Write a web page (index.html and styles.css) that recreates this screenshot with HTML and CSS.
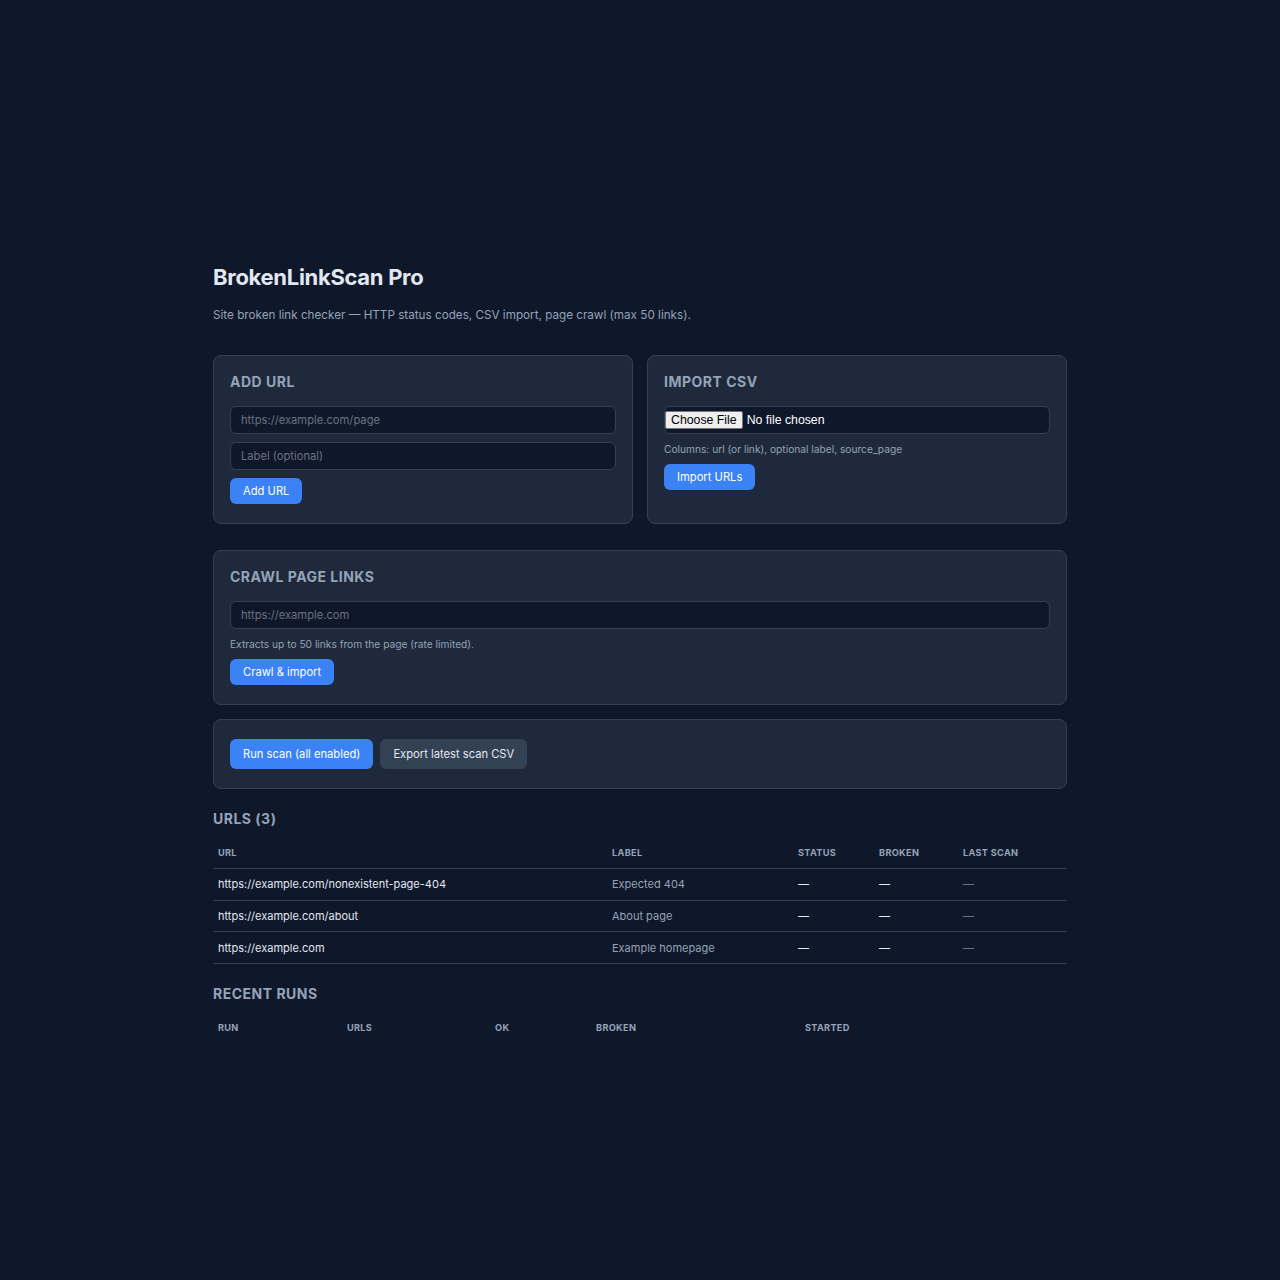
FILE: index.html
```html
<!DOCTYPE html>
<html lang="en">
<head>
<meta charset="utf-8">
<title>BrokenLinkScan Pro</title>
<link rel="stylesheet" href="styles.css">
</head>
<body>
<main class="wrap">
  <h1 class="title">BrokenLinkScan Pro</h1>
  <p class="subtitle">Site broken link checker — HTTP status codes, CSV import, page crawl (max 50 links).</p>

  <div class="grid2">
    <section class="card">
      <h2 class="card-title">Add URL</h2>
      <input class="field" type="text" placeholder="https://example.com/page">
      <input class="field" type="text" placeholder="Label (optional)">
      <div class="btn-row"><button class="btn btn-primary">Add URL</button></div>
    </section>
    <section class="card">
      <h2 class="card-title">Import CSV</h2>
      <div class="field file-field"><span class="file-btn">Choose File</span><span class="file-text">No file chosen</span></div>
      <p class="hint">Columns: url (or link), optional label, source_page</p>
      <div class="btn-row"><button class="btn btn-primary">Import URLs</button></div>
    </section>
  </div>

  <section class="card card-crawl">
    <h2 class="card-title">Crawl page links</h2>
    <input class="field" type="text" placeholder="https://example.com">
    <p class="hint">Extracts up to 50 links from the page (rate limited).</p>
    <div class="btn-row"><button class="btn btn-primary">Crawl &amp; import</button></div>
  </section>

  <section class="card card-actions">
    <button class="btn btn-primary btn-lg">Run scan (all enabled)</button>
    <button class="btn btn-secondary btn-lg">Export latest scan CSV</button>
  </section>

  <h2 class="section-title">URLs (3)</h2>
  <table class="tbl tbl-urls">
    <thead>
      <tr><th class="c-url">URL</th><th class="c-label">Label</th><th class="c-status">Status</th><th class="c-broken">Broken</th><th>Last scan</th></tr>
    </thead>
    <tbody>
      <tr><td>https://example.com/nonexistent-page-404</td><td class="muted">Expected 404</td><td>—</td><td>—</td><td class="dim">—</td></tr>
      <tr><td>https://example.com/about</td><td class="muted">About page</td><td>—</td><td>—</td><td class="dim">—</td></tr>
      <tr><td>https://example.com</td><td class="muted">Example homepage</td><td>—</td><td>—</td><td class="dim">—</td></tr>
    </tbody>
  </table>

  <h2 class="section-title section-runs">Recent runs</h2>
  <table class="tbl tbl-runs">
    <thead>
      <tr><th class="r-run">Run</th><th class="r-urls">URLs</th><th class="r-ok">OK</th><th class="r-broken">Broken</th><th>Started</th></tr>
    </thead>
    <tbody></tbody>
  </table>
</main>
</body>
</html>
```

FILE: styles.css
```css
* { box-sizing: border-box; }
html, body {
  margin: 0;
  background: #0f172a;
  color: #e2e8f0;
  font-family: Inter, "Noto Sans", "Liberation Sans", sans-serif;
}
.wrap {
  width: 854px;
  margin: 0 auto;
  padding-top: 262px;
}
.title {
  margin: 0;
  font-size: 22px;
  line-height: 30px;
  font-weight: 700;
  color: #e2e8f0;
  letter-spacing: -0.3px;
}
.subtitle {
  margin: 15px 0 0;
  font-size: 11.7px;
  line-height: 16px;
  color: #94a3b8;
}
.grid2 {
  display: grid;
  grid-template-columns: 1fr 1fr;
  gap: 14px;
  margin-top: 32px;
}
.card {
  background: #1e293b;
  border: 1px solid #334155;
  border-radius: 8px;
  padding: 17px 16px 19px;
  display: flex;
  flex-direction: column;
  align-items: stretch;
}
.card-title {
  margin: 0 0 15px;
  font-size: 14px;
  line-height: 18px;
  font-weight: 700;
  text-transform: uppercase;
  letter-spacing: 0.5px;
  color: #94a3b8;
}
.field {
  height: 28px;
  margin: 0 0 8px;
  padding: 0 10px;
  background: #0f172a;
  border: 1px solid #334155;
  border-radius: 6px;
  color: #e2e8f0;
  font-family: inherit;
  font-size: 11.2px;
  outline: none;
}
.field::placeholder { color: #6b7280; }
.file-field {
  display: flex;
  align-items: center;
  padding: 0;
}
.file-btn {
  margin-left: 0;
  height: 18px;
  padding: 0 5px;
  display: inline-flex;
  align-items: center;
  background: #efefef;
  border: 1px solid #767676;
  border-radius: 2px;
  color: #000;
  font-family: "Liberation Sans", Arial, sans-serif;
  font-size: 12.3px;
}
.file-text {
  margin-left: 4px;
  color: #fff;
  font-family: "Liberation Sans", Arial, sans-serif;
  font-size: 12.3px;
}
.hint {
  margin: 0 0 8px;
  font-size: 10.2px;
  line-height: 14px;
  color: #94a3b8;
}
.btn-row { display: flex; }
.btn {
  border: 0;
  border-radius: 6px;
  font-family: inherit;
  font-size: 11.2px;
  line-height: 16px;
  padding: 0 13px;
  height: 26px;
  color: #fff;
  cursor: pointer;
}
.btn-primary { background: #3b82f6; }
.btn-secondary { background: #334155; color: #e2e8f0; }
.btn-lg { height: 30px; }
.card-crawl { margin-top: 26px; }
.card-actions {
  margin-top: 14px;
  flex-direction: row;
  gap: 7px;
  padding: 19px 16px;
}
.section-title {
  margin: 20px 0 0;
  font-size: 14px;
  line-height: 20px;
  font-weight: 700;
  text-transform: uppercase;
  letter-spacing: 0.5px;
  color: #94a3b8;
}
.section-runs { margin-top: 20px; }
.tbl {
  width: 100%;
  border-collapse: collapse;
  margin-top: 12px;
  font-size: 11px;
}
.tbl th {
  text-align: left;
  font-size: 9.2px;
  font-weight: 700;
  text-transform: uppercase;
  letter-spacing: 0.3px;
  color: #94a3b8;
  padding: 6px 5px 9px;
  line-height: 12px;
}
.tbl-urls th { border-bottom: 1px solid #334155; }
.tbl td {
  padding: 0 5px;
  height: 31.7px;
  line-height: 16px;
  border-bottom: 1px solid #334155;
  color: #e2e8f0;
}
.tbl td.muted { color: #94a3b8; }
.tbl td.dim { color: #64748b; }
.c-url { width: 394px; }
.c-label { width: 186px; }
.c-status { width: 81px; }
.c-broken { width: 84px; }
.r-run { width: 129px; }
.r-urls { width: 148px; }
.r-ok { width: 101px; }
.r-broken { width: 209px; }
```
